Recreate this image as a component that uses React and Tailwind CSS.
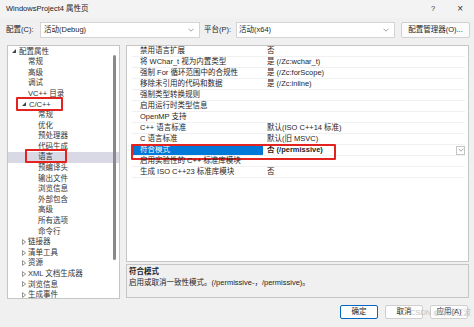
import React from 'react';

const tree = [
  { t: '配置属性', lvl: 0, icon: 'open' },
  { t: '常规', lvl: 1 },
  { t: '高级', lvl: 1 },
  { t: '调试', lvl: 1 },
  { t: 'VC++ 目录', lvl: 1 },
  { t: 'C/C++', lvl: 1, icon: 'open' },
  { t: '常规', lvl: 2 },
  { t: '优化', lvl: 2 },
  { t: '预处理器', lvl: 2 },
  { t: '代码生成', lvl: 2 },
  { t: '语言', lvl: 2, sel: true },
  { t: '预编译头', lvl: 2 },
  { t: '输出文件', lvl: 2 },
  { t: '浏览信息', lvl: 2 },
  { t: '外部包含', lvl: 2 },
  { t: '高级', lvl: 2 },
  { t: '所有选项', lvl: 2 },
  { t: '命令行', lvl: 2 },
  { t: '链接器', lvl: 1, icon: 'closed' },
  { t: '清单工具', lvl: 1, icon: 'closed' },
  { t: '资源', lvl: 1, icon: 'closed' },
  { t: 'XML 文档生成器', lvl: 1, icon: 'closed' },
  { t: '浏览信息', lvl: 1, icon: 'closed' },
  { t: '生成事件', lvl: 1, icon: 'closed' },
];

const props = [
  ['禁用语言扩展', '否'],
  ['将 WChar_t 视为内置类型', '是 (/Zc:wchar_t)'],
  ['强制 For 循环范围中的合规性', '是 (/Zc:forScope)'],
  ['移除未引用的代码和数据', '是 (/Zc:inline)'],
  ['强制类型转换规则', ''],
  ['启用运行时类型信息', ''],
  ['OpenMP 支持', ''],
  ['C++ 语言标准', '默认(ISO C++14 标准)'],
  ['C 语言标准', '默认(旧 MSVC)'],
  ['符合模式', '否 (/permissive)', true],
  ['启用实验性的 C++ 标准库模块', ''],
  ['生成 ISO C++23 标准库模块', '否'],
];

const Chevron = ({ className }) => (
  <svg width="6" height="4" viewBox="0 0 6 4" className={className}>
    <path d="M0.5 0.7 L3 3.2 L5.5 0.7" fill="none" stroke="#8a8a8a" strokeWidth="0.8" />
  </svg>
);

const TreeIcon = ({ kind }) => {
  if (kind === 'open')
    return (
      <svg width="4" height="4" viewBox="0 0 4 4" className="mr-[3px] shrink-0">
        <path d="M4 0 L4 4 L0 4 Z" fill="#444" />
      </svg>
    );
  return (
    <svg width="4" height="6" viewBox="0 0 4 6" className="mr-[2px] shrink-0">
      <path d="M0.5 0.6 L3.6 3 L0.5 5.4 Z" fill="none" stroke="#666" strokeWidth="0.7" />
    </svg>
  );
};

export default function App() {
  return (
    <div className="relative w-[474px] h-[327px] overflow-hidden bg-[#f0f0f0] text-[#1e1e1e] font-['Liberation_Sans','Noto_Sans_CJK_SC',sans-serif] text-[7.5px] leading-none whitespace-nowrap">
      {/* title bar */}
      <div className="h-[18px] flex items-center pl-[6px] pr-[11px] bg-[#f3f3f3]">
        <span className="text-[#222]">WindowsProject4 属性页</span>
        <span className="ml-auto text-[#333]">?</span>
        <span className="ml-[22px] text-[10px] text-[#333]">×</span>
      </div>

      {/* config row */}
      <div className="mt-[4px] h-[16px] flex items-center">
        <span className="ml-[6px] w-[34px]">配置(C):</span>
        <div className="w-[160px] h-[16px] bg-white border border-[#d4d4d4] flex items-center pl-[3px] pr-[5px]">
          <span>活动(Debug)</span>
          <Chevron className="ml-auto" />
        </div>
        <span className="ml-[4px] w-[32px]">平台(P):</span>
        <div className="w-[159px] h-[16px] bg-white border border-[#d4d4d4] flex items-center pl-[2px] pr-[5px]">
          <span>活动(x64)</span>
          <Chevron className="ml-auto" />
        </div>
        <div className="ml-[6px] w-[69px] h-[16px] bg-[#fbfbfb] border border-[#d0d0d0] rounded-[2px] flex items-center justify-center">
          配置管理器(O)...
        </div>
      </div>

      {/* main */}
      <div className="mt-[7px] flex">
        {/* tree */}
        <div className="ml-[7px] w-[113px] h-[254px] bg-white border border-[#c6c6c6] overflow-hidden relative">
          {tree.map((n, i) => (
            <div
              key={i}
              className={`h-[10.6px] flex items-center text-[#333] ${n.sel ? 'bg-[#d9d9e5]' : ''} ${
                n.lvl === 0 ? 'pl-[4px]' : n.lvl === 1 ? (n.icon ? 'pl-[14px]' : 'pl-[20px]') : 'pl-[30px]'
              }`}
            >
              {n.icon && <TreeIcon kind={n.icon} />}
              <span>{n.t}</span>
            </div>
          ))}
          <div className="absolute right-[3px] top-[9px] w-[3px] h-[205px] bg-[#8a8a8a] rounded-full" />
          {/* annotation boxes */}
          <div className="absolute left-[8px] top-[51px] w-[47px] h-[14px] border-2 border-[#e3231f] rounded-[1px]" />
          <div className="absolute left-[17px] top-[103px] w-[42px] h-[14px] border-2 border-[#e3231f] rounded-[1px]" />
        </div>

        {/* right side */}
        <div className="ml-[6px] w-[343px] flex flex-col">
          <div className="h-[217px] bg-white border border-[#c6c6c6] pl-[5px] pr-[3px]">
            {props.map(([k, v, sel], i) => (
              <div key={i} className="relative h-[11px] flex items-center border-b border-[#f1f1f1]">
                <div className={`w-[131px] h-full flex items-center pl-[8px] ${sel ? 'bg-[#0078d7] text-white' : ''}`}>
                  <span>{k}</span>
                </div>
                <div className={`pl-[4px] ${sel ? 'font-bold' : ''}`}>{v}</div>
                {sel && (
                  <>
                    <div className="absolute left-[-1px] top-[-1px] w-[205px] h-[16px] border-2 border-[#e3231f] rounded-[1px]" />
                    <div className="ml-auto w-[9px] h-[9px] border border-[#c4c4c4] bg-white flex items-center justify-center">
                      <Chevron />
                    </div>
                  </>
                )}
              </div>
            ))}
          </div>
          <div className="mt-[2px] h-[34px] bg-[#f0f0f0] border border-[#c6c6c6] pl-[2px] pt-[3px]">
            <div className="font-bold">符合模式</div>
            <div className="mt-[3px]">启用或取消一致性模式。(/permissive-，/permissive)。</div>
          </div>
        </div>
      </div>

      {/* buttons */}
      <div className="mt-[6px] flex justify-end pr-[6px] gap-[7px]">
        <div className="w-[38px] h-[14px] bg-[#fdfdfd] border border-[#0067c0] rounded-[2px] flex items-center justify-center">确定</div>
        <div className="w-[38px] h-[14px] bg-[#fdfdfd] border border-[#d0d0d0] rounded-[2px] flex items-center justify-center">取消</div>
        <div className="w-[38px] h-[14px] bg-[#fdfdfd] border border-[#d0d0d0] rounded-[2px] flex items-center justify-center">应用(A)</div>
      </div>

      {/* watermark */}
      <div className="absolute left-[410px] top-[309px] text-[#c4c4c4]">CSDN @米米仁波</div>
    </div>
  );
}
